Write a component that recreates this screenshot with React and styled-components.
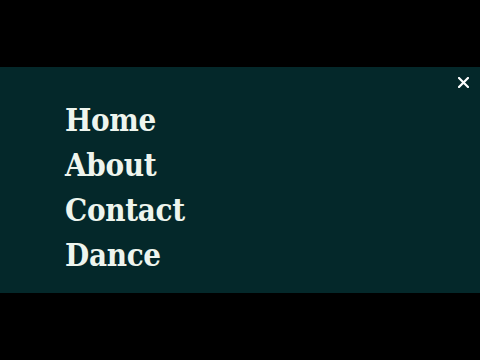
import styled, { createGlobalStyle } from "styled-components";

const GlobalStyle = createGlobalStyle`
  html, body {
    margin: 0;
    padding: 0;
    background: #000;
  }
`;

const links = ["Home", "About", "Contact", "Dance"];

const App = () => {
  return (
    <Page>
      <GlobalStyle />
      <MenuPanel>
        <CloseButton aria-label="Close menu">
          <svg width="11" height="11" viewBox="0 0 11 11">
            <path
              d="M1 1 L10 10 M10 1 L1 10"
              stroke="#fff"
              strokeWidth="2.2"
              strokeLinecap="square"
            />
          </svg>
        </CloseButton>
        <NavList>
          {links.map((l) => (
            <NavItem key={l}>
              <NavLink href="#">{l}</NavLink>
            </NavItem>
          ))}
        </NavList>
      </MenuPanel>
    </Page>
  );
};

const Page = styled.div`
  width: 480px;
  height: 360px;
  display: flex;
  flex-direction: column;
  justify-content: center;
  background: #000;
`;

const MenuPanel = styled.nav`
  position: relative;
  height: 226px;
  background: #04282a;
  padding: 31px 0 0 65px;
  box-sizing: border-box;
`;

const CloseButton = styled.button`
  position: absolute;
  top: 9px;
  right: 11px;
  width: 12px;
  height: 12px;
  padding: 0;
  border: 0;
  background: none;
  display: flex;
  align-items: center;
  justify-content: center;
  cursor: pointer;
`;

const NavList = styled.ul`
  list-style: none;
  margin: 0;
  padding: 0;
`;

const NavItem = styled.li`
  font-family: "DejaVu Serif Condensed", "DejaVu Serif", serif;
  font-stretch: condensed;
  font-weight: 700;
  font-size: 31px;
  line-height: 45px;
  letter-spacing: -0.3px;
`;

const NavLink = styled.a`
  display: block;
  color: #eef5ee;
  text-decoration: none;
`;

export default App;
